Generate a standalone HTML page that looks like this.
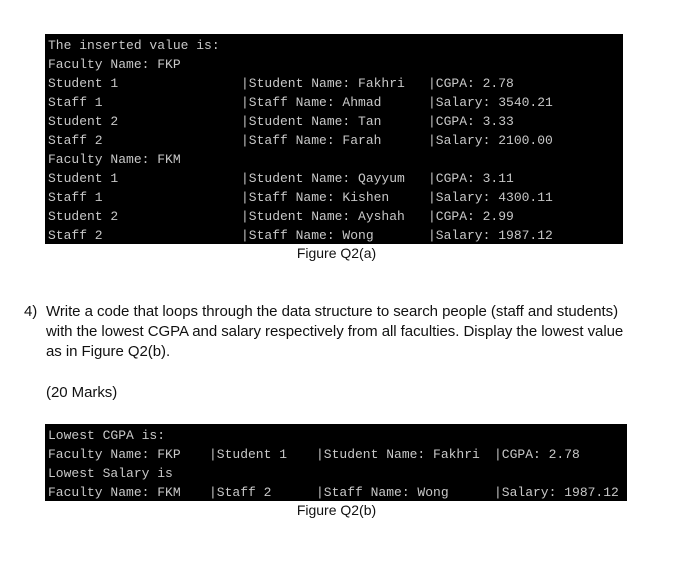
<!DOCTYPE html>
<html><head><meta charset="utf-8"><style>
body{margin:0;width:673px;height:566px;background:#fff;position:relative;overflow:hidden}
.t{position:absolute;background:#000;}
.m{position:absolute;font-family:"Liberation Mono",monospace;font-size:13px;color:#c8c8c8;white-space:pre;line-height:19px}
.s{position:absolute;font-family:"Liberation Sans",Arial,sans-serif;font-size:14px;color:#111;white-space:pre;line-height:20px}
.p{font-size:15px;letter-spacing:-0.05px}
</style></head><body>
<div class="t" style="left:45px;top:34px;width:578px;height:210px"></div>
<div class="m" style="left:48px;top:36px">The inserted value is:
Faculty Name: FKP
Student 1
Staff 1
Student 2
Staff 2
Faculty Name: FKM
Student 1
Staff 1
Student 2
Staff 2</div>
<div class="m" style="left:241px;top:36px">

|Student Name: Fakhri
|Staff Name: Ahmad
|Student Name: Tan
|Staff Name: Farah

|Student Name: Qayyum
|Staff Name: Kishen
|Student Name: Ayshah
|Staff Name: Wong</div>
<div class="m" style="left:428px;top:36px">

|CGPA: 2.78
|Salary: 3540.21
|CGPA: 3.33
|Salary: 2100.00

|CGPA: 3.11
|Salary: 4300.11
|CGPA: 2.99
|Salary: 1987.12</div>
<div class="s" style="left:0;width:673px;text-align:center;top:243px">Figure Q2(a)</div>

<div class="s p" style="left:24px;top:302px">4)</div>
<div class="s p" style="left:46px;top:302px">Write a code that loops through the data structure to search people (staff and students)
with the lowest CGPA and salary respectively from all faculties. Display the lowest value
as in Figure Q2(b).</div>
<div class="s p" style="left:46px;top:383px">(20 Marks)</div>

<div class="t" style="left:45px;top:424px;width:582px;height:77px"></div>
<div class="m" style="left:48px;top:426px">Lowest CGPA is:
Faculty Name: FKP
Lowest Salary is
Faculty Name: FKM</div>
<div class="m" style="left:209px;top:426px">
|Student 1

|Staff 2</div>
<div class="m" style="left:316px;top:426px">
|Student Name: Fakhri

|Staff Name: Wong</div>
<div class="m" style="left:494px;top:426px">
|CGPA: 2.78

|Salary: 1987.12</div>
<div class="s" style="left:0;width:673px;text-align:center;top:500px">Figure Q2(b)</div>
</body></html>
